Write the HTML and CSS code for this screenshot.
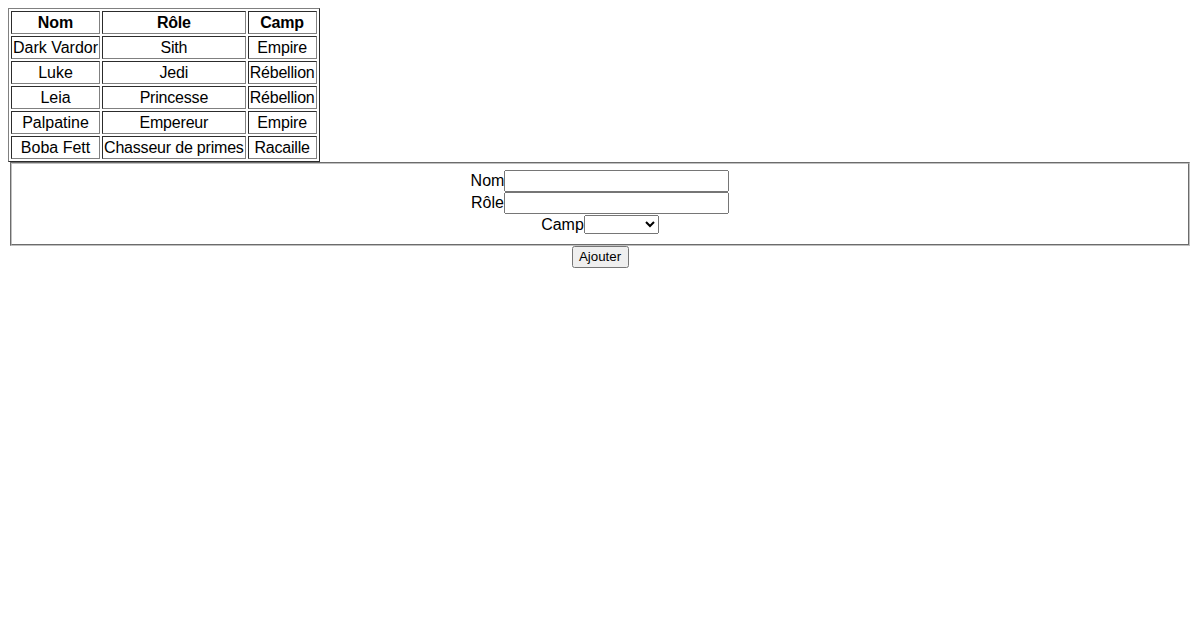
FILE: index.html
```html
<!DOCTYPE html>
<html lang="fr">
<head>
<meta charset="utf-8">
<title>Personnages</title>
<link rel="stylesheet" href="styles.css">
</head>
<body class="page">
<table class="grid">
<thead>
<tr><th class="cell">Nom</th><th class="cell">Rôle</th><th class="cell">Camp</th></tr>
</thead>
<tbody>
<tr><td class="cell">Dark Vardor</td><td class="cell">Sith</td><td class="cell">Empire</td></tr>
<tr><td class="cell">Luke</td><td class="cell">Jedi</td><td class="cell">Rébellion</td></tr>
<tr><td class="cell">Leia</td><td class="cell">Princesse</td><td class="cell">Rébellion</td></tr>
<tr><td class="cell">Palpatine</td><td class="cell">Empereur</td><td class="cell">Empire</td></tr>
<tr><td class="cell">Boba Fett</td><td class="cell">Chasseur de primes</td><td class="cell">Racaille</td></tr>
</tbody>
</table>
<form class="form">
<fieldset class="box">
<label class="lbl" for="nom">Nom</label><input class="txt" id="nom" type="text"><br>
<label class="lbl" for="role">Rôle</label><input class="txt" id="role" type="text"><br>
<label class="lbl" for="camp">Camp</label><select class="sel" id="camp"><option></option><option>Empire</option><option>Rébellion</option><option>Racaille</option></select>
</fieldset>
<button class="btn" type="button">Ajouter</button>
</form>
</body>
</html>
```

FILE: styles.css
```css
.page {
  margin: 8px;
  font-family: "Liberation Sans", Arial, sans-serif;
  font-size: 16px;
  text-align: center;
  color: #000;
  background: #fff;
}
.grid {
  border: 1px outset #808080;
  border-spacing: 2px;
}
.cell {
  border: 1px inset #808080;
  padding: 1px;
  line-height: 19px;
  letter-spacing: -0.2px;
  text-align: center;
}
.cell:first-child {
  letter-spacing: 0;
}
.form {
  margin: 0;
}
.box {
  margin: 0 2px;
  padding: 0.35em 0.75em 8px;
  border: 2px groove #c0c0c0;
  line-height: 22px;
}
.txt {
  width: 225px;
  height: 22px;
  box-sizing: border-box;
  vertical-align: bottom;
}
.sel {
  width: 75px;
  height: 19px;
  box-sizing: border-box;
  vertical-align: 1px;
}
.btn {
  margin-top: 0;
  height: 22px;
  width: 57px;
  padding: 1px 4px;
  vertical-align: top;
}
```
